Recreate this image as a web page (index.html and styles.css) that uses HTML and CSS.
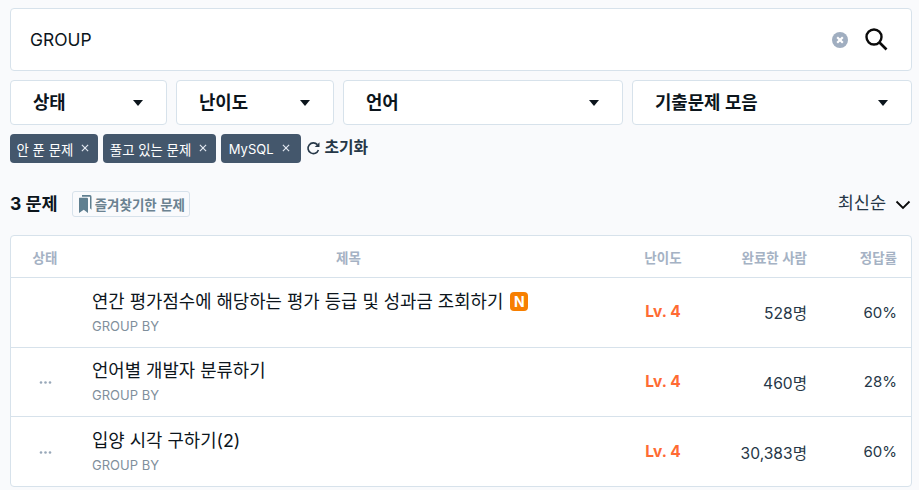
FILE: index.html
```html
<!DOCTYPE html>
<html lang="ko">
<head>
<meta charset="utf-8">
<title>문제 목록</title>
<link rel="stylesheet" href="styles.css">
</head>
<body>
<div class="search">
  <span class="search-text">GROUP</span>
  <svg class="clear" width="16" height="16" viewBox="0 0 16 16"><circle cx="8" cy="8" r="8" fill="#a0aec0"/><path d="M5.200 5.200l5.600 5.600M10.800 5.200l-5.600 5.600" stroke="#fff" stroke-width="2.200" fill="none"/></svg>
  <svg class="glass" width="24" height="24" viewBox="0 0 24 24"><circle cx="10" cy="10" r="7.500" fill="none" stroke="#0a0a0a" stroke-width="2.400"/><path d="M15.500 15.500l7 7" stroke="#0a0a0a" stroke-width="2.600" fill="none"/></svg>
</div>
<div class="filters">
  <div class="select s1"><span>상태</span><i class="caret"></i></div>
  <div class="select s2"><span>난이도</span><i class="caret"></i></div>
  <div class="select s3"><span>언어</span><i class="caret"></i></div>
  <div class="select s4"><span>기출문제 모음</span><i class="caret"></i></div>
</div>
<div class="tags">
  <span class="tag">안 푼 문제<svg class="x" width="8" height="8" viewBox="0 0 9 9"><path d="M1 1l7 7M8 1l-7 7" stroke="#e2e8f0" stroke-width="1.300" fill="none"/></svg></span>
  <span class="tag">풀고 있는 문제<svg class="x" width="8" height="8" viewBox="0 0 9 9"><path d="M1 1l7 7M8 1l-7 7" stroke="#e2e8f0" stroke-width="1.300" fill="none"/></svg></span>
  <span class="tag tag-latin">MySQL<svg class="x" width="8" height="8" viewBox="0 0 9 9"><path d="M1 1l7 7M8 1l-7 7" stroke="#e2e8f0" stroke-width="1.300" fill="none"/></svg></span>
  <span class="reset"><svg width="15" height="15" viewBox="0 0 14 14"><path d="M11.600 8.400A5 5 0 1 1 10.600 3.400" fill="none" stroke="#263747" stroke-width="1.500"/><path d="M12.600 1.200v4.400H8.200z" fill="#263747"/></svg>초기화</span>
</div>
<div class="summary">
  <div class="summary-left">
    <strong class="count">3 문제</strong>
    <span class="bookmark"><svg width="14" height="18" viewBox="0 0 14 16" preserveAspectRatio="none"><path d="M4 0h8a1.500 1.500 0 0 1 1.500 1.500V13l-1.500-1.200V1.500H4z" fill="#5f7f90"/><path d="M1.500 2.500h7.500a1 1 0 0 1 1 1V16l-4.250-3L1 16V3a.5.5 0 0 1 .5-.5z" fill="#5f7f90"/></svg>즐겨찾기한 문제</span>
  </div>
  <div class="sort">최신순<svg width="16" height="10" viewBox="0 0 16 10"><path d="M1.500 1.500L8 8l6.500-6.500" fill="none" stroke="#0a0a0a" stroke-width="1.800"/></svg></div>
</div>
<div class="table">
  <div class="row head">
    <div class="c-status">상태</div>
    <div class="c-title">제목</div>
    <div class="c-level">난이도</div>
    <div class="c-done">완료한 사람</div>
    <div class="c-rate">정답률</div>
  </div>
  <div class="row item">
    <div class="c-status"></div>
    <div class="c-title"><div class="name">연간 평가점수에 해당하는 평가 등급 및 성과금 조회하기<b class="new">N</b></div><div class="part">GROUP BY</div></div>
    <div class="c-level">Lv. 4</div>
    <div class="c-done">528명</div>
    <div class="c-rate">60%</div>
  </div>
  <div class="row item">
    <div class="c-status"><svg class="dots" width="13" height="3" viewBox="0 0 13 3"><circle cx="2" cy="1.500" r="1.300"/><circle cx="6.500" cy="1.500" r="1.300"/><circle cx="11" cy="1.500" r="1.300"/></svg></div>
    <div class="c-title"><div class="name">언어별 개발자 분류하기</div><div class="part">GROUP BY</div></div>
    <div class="c-level">Lv. 4</div>
    <div class="c-done">460명</div>
    <div class="c-rate">28%</div>
  </div>
  <div class="row item">
    <div class="c-status"><svg class="dots" width="13" height="3" viewBox="0 0 13 3"><circle cx="2" cy="1.500" r="1.300"/><circle cx="6.500" cy="1.500" r="1.300"/><circle cx="11" cy="1.500" r="1.300"/></svg></div>
    <div class="c-title"><div class="name">입양 시각 구하기(2)</div><div class="part">GROUP BY</div></div>
    <div class="c-level">Lv. 4</div>
    <div class="c-done">30,383명</div>
    <div class="c-rate">60%</div>
  </div>
</div>
</body>
</html>
```
FILE: styles.css
```css
* { box-sizing: border-box; }
html, body { height: 100%; }
body {
  margin: 0;
  padding: 8px 7px 0 10px;
  background: #f9fafc;
  color: #0c151c;
  font-family: Inter, "Noto Sans CJK KR", sans-serif;
  overflow: hidden;
}
.search {
  height: 63px;
  background: #fff;
  border: 1px solid #d7e2eb;
  border-radius: 4px;
  display: flex;
  align-items: center;
  padding: 0 23px 0 19px;
}
.search-text { flex: 1; font-size: 17.400px; line-height: 20px; }
.clear { margin-right: 16px; margin-top: 1px; }
.glass { margin-top: -2px; }
.filters { display: flex; gap: 9px; margin-top: 9px; }
.select {
  height: 45px;
  background: #fff;
  border: 1px solid #d7e2eb;
  border-radius: 4px;
  display: flex;
  align-items: center;
  justify-content: space-between;
  padding: 0 23px 0 22px;
  font-size: 17.800px;
  font-weight: 600;
}
.select span { line-height: 24px; }
.s1 { width: 157px; }
.s2 { width: 158px; }
.s3 { width: 280px; }
.s4 { width: 280px; }
.caret {
  width: 0; height: 0;
  border-left: 5px solid transparent;
  border-right: 5px solid transparent;
  border-top: 6px solid #0c151c;
  margin-top: 1px;
}
.tags { display: flex; align-items: center; gap: 5px; margin-top: 9px; height: 29px; }
.tag {
  height: 29px;
  background: #44576c;
  color: #fff;
  border-radius: 4px;
  padding: 0 9px 0 6.500px;
  display: flex;
  align-items: center;
  font-size: 13.400px;
}
.tag-latin { font-size: 13px; padding-right: 11px; padding-left: 7.500px; }
.x { margin-left: 8px; margin-top: -2px; }
.reset {
  display: flex;
  align-items: center;
  gap: 4px;
  font-size: 15.800px;
  font-weight: 600;
  color: #263747;
  line-height: 20px;
  margin-top: -1px;
}
.summary {
  display: flex;
  justify-content: space-between;
  align-items: center;
  margin-top: 28px;
  height: 26px;
}
.summary-left { display: flex; align-items: center; gap: 14px; }
.count { font-size: 17.500px; font-weight: 700; line-height: 22px; margin-top: -1px; }
.bookmark {
  height: 26px;
  border: 1px solid #d7e2eb;
  border-radius: 3px;
  display: flex;
  align-items: center;
  gap: 3px;
  padding: 0 4px 0 5px;
  font-size: 13.500px;
  font-weight: 600;
  color: #6b8291;
}
.sort { display: flex; align-items: center; gap: 9px; font-size: 17.500px; color: #263747; line-height: 22px; padding-right: 1px; margin-top: -2px; }
.sort svg { margin-top: 3px; }
.table {
  margin-top: 18px;
  height: 252px;
  background: #fff;
  border: 1px solid #d7e2eb;
  border-radius: 4px;
}
.row {
  display: grid;
  grid-template-columns: 68px 539px 90px 99px 90px;
  align-items: center;
  padding-right: 13px;
}
.head {
  height: 42px;
  border-bottom: 1px solid #d7e2eb;
  font-size: 13.500px;
  font-weight: 600;
  color: #a5b2c4;
}
.item { height: 70px; border-bottom: 1px solid #d7e2eb; }
.row.item:nth-child(3) { height: 69px; }
.item:last-child { border-bottom: 0; }
.c-status { text-align: center; }
.head .c-title { text-align: center; }
.c-level { text-align: center; }
.c-done, .c-rate { text-align: right; }
.item .c-title { padding-left: 13px; }
.item .c-level { font-size: 15.500px; font-weight: 700; color: #ff6b33; margin-top: -2px; }
.item .c-done { font-size: 15.600px; color: #263747; margin-top: -1px; }
.item .c-rate { font-size: 15px; color: #263747; margin-top: -1px; }
.dots { fill: #98a8b9; display: block; margin: 1px auto 0; }
.name { font-size: 17.800px; line-height: 24px; color: #0c151c; display: flex; align-items: center; margin-top: -2px; }
.part { font-size: 13px; line-height: 16px; color: #7f8f9c; margin-top: 4px; }
.new {
  width: 18px; height: 19px;
  margin-left: 7px;
  border-radius: 4px;
  background: #f77f00;
  color: #fff;
  font-size: 14px;
  font-weight: 700;
  display: flex; align-items: center; justify-content: center;
}
```
